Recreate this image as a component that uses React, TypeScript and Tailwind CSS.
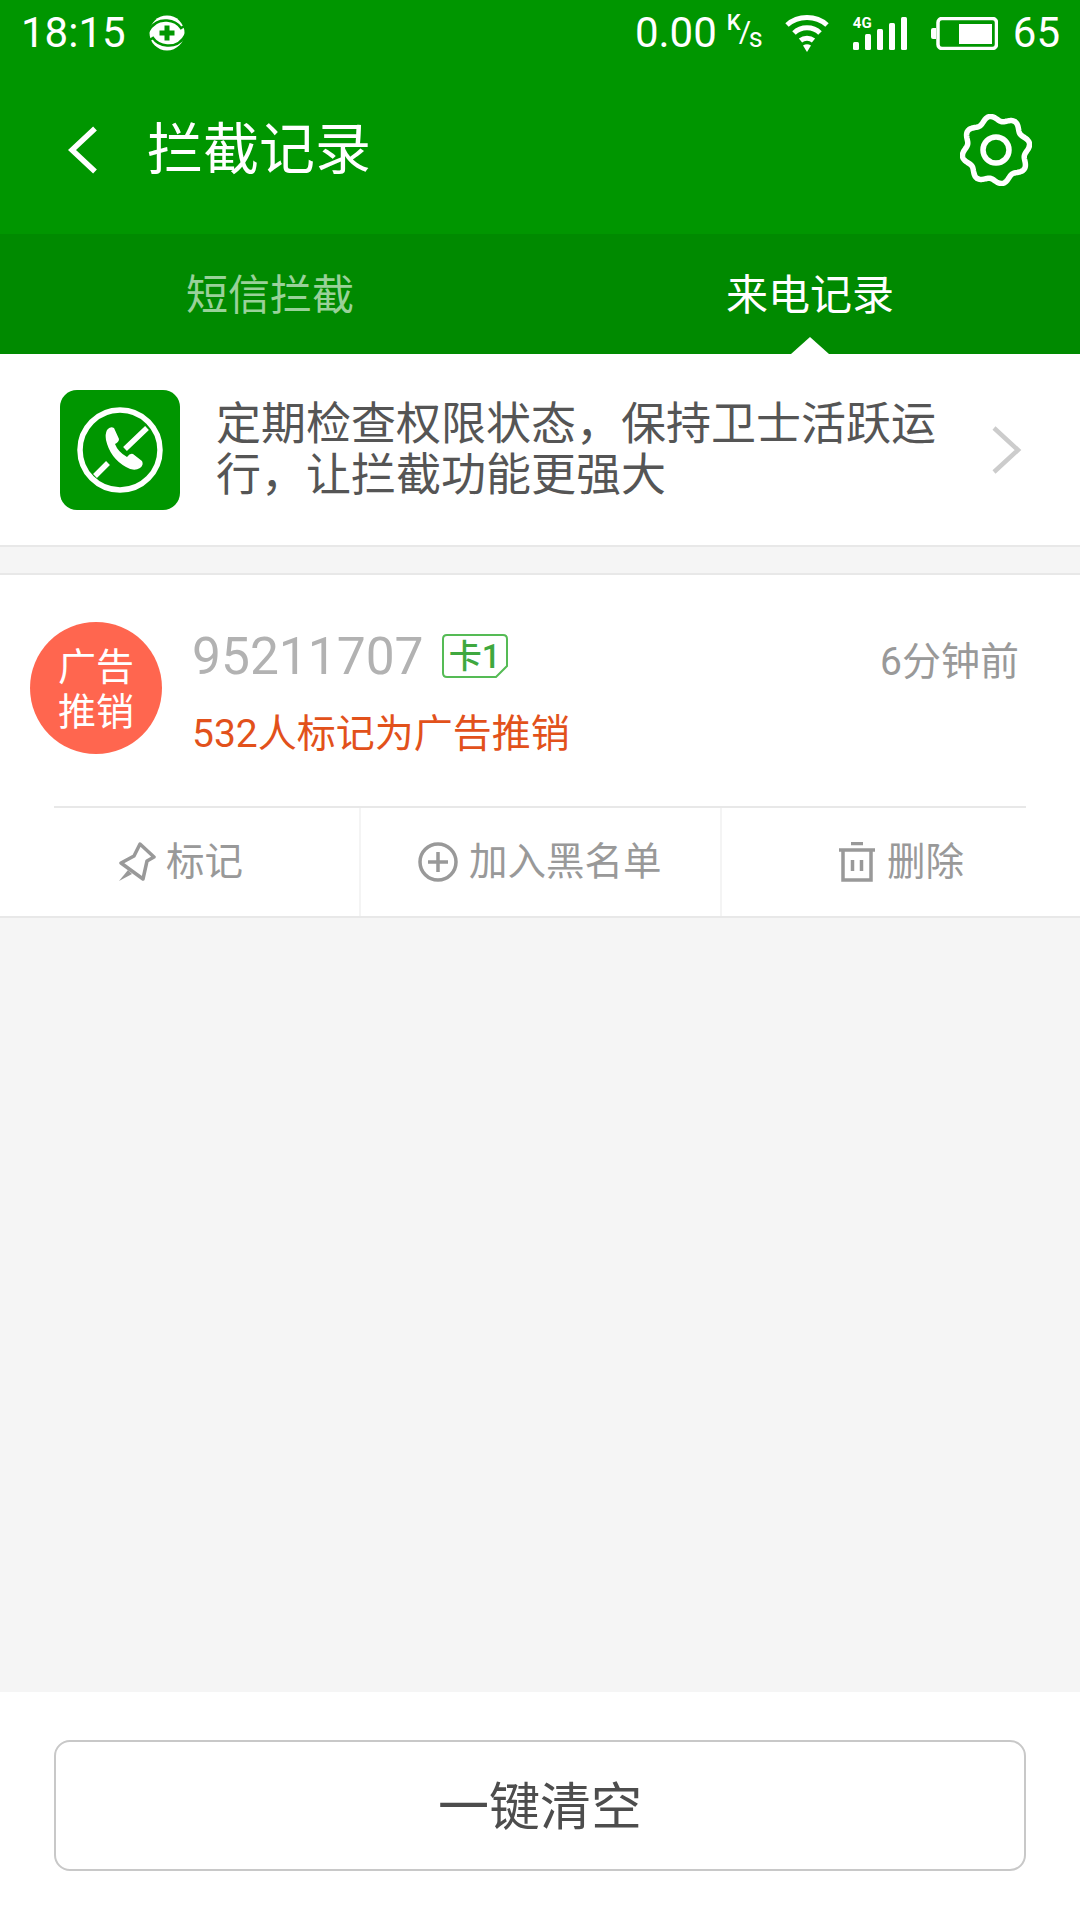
const gearPath = (() => {
    // scalloped outline with 8 bumps
    const pts: string[] = [];
    for (let i = 0; i < 240; i++) {
        const a = (i / 240) * Math.PI * 2;
        const r = 31.5 + 2.6 * Math.cos(a * 8 + Math.PI / 2);
        pts.push(`${(36 + r * Math.cos(a)).toFixed(2)} ${(36 + r * Math.sin(a)).toFixed(2)}`);
    }
    return `M${pts.join('L')}Z`;
})();

function GuardLogo() {
    return (
        <svg width="36" height="36" viewBox="0 0 36 36">
            <circle cx="18" cy="18" r="17.500" fill="white" />
            <path d="M-1 17C4 7 12 5 18 5.500c6 .5 11 3 14 7.500l5-3" fill="none" stroke="#009600" strokeWidth="2.500" />
            <path d="M37 19C32 29 24 31 18 30.500c-6-.5-11-3-14-7.500l-5 3" fill="none" stroke="#009600" strokeWidth="2.500" />
            <path d="M15.500 10.500h5v5h5v5h-5v5h-5v-5h-5v-5h5z" fill="#009600" />
        </svg>
    );
}

function WifiIcon() {
    return (
        <svg width="44" height="38" viewBox="0 0 44 38" fill="none" stroke="white" strokeWidth="5">
            <path d="M2 11C13 1 31 1 42 11" />
            <path d="M9 19C16 12 28 12 35 19" />
            <path d="M15.500 26.500C19 23.500 25 23.500 28.500 26.500" />
            <path d="M18 31.500L22 38L26 31.500Q22 29 18 31.500Z" fill="white" stroke="none" />
        </svg>
    );
}

function SignalIcon() {
    return (
        <div className="relative w-[54px] h-[33px]">
            <span className="absolute left-0 top-[-1px] text-[15px] leading-[14px] font-bold text-white">4G</span>
            <svg className="absolute inset-0" width="54" height="33" viewBox="0 0 54 33" fill="white">
                <rect x="0" y="25" width="6" height="8" rx="1.500" />
                <rect x="12" y="17" width="6" height="16" rx="1.500" />
                <rect x="24" y="12" width="6" height="21" rx="1.500" />
                <rect x="36" y="6" width="6" height="27" rx="1.500" />
                <rect x="48" y="0" width="6" height="33" rx="1.500" />
            </svg>
        </div>
    );
}

function BatteryIcon() {
    return (
        <svg width="67" height="33" viewBox="0 0 67 33" fill="white">
            <path d="M0 13q0-2 2-2h3v11H2q-2 0-2-2z" />
            <rect x="7" y="1.500" width="58.500" height="30" rx="4" fill="none" stroke="white" strokeWidth="3.500" />
            <rect x="28" y="7" width="33" height="20" />
        </svg>
    );
}

function ChevronLeft() {
    return (
        <svg width="30" height="48" viewBox="0 0 30 48" fill="none" stroke="white" strokeWidth="5.500">
            <path d="M27 2.500L4 24L27 45.500" />
        </svg>
    );
}

function GearIcon() {
    return (
        <svg width="72" height="72" viewBox="0 0 72 72" fill="none" stroke="white" strokeWidth="5.500">
            <path d={gearPath} strokeLinejoin="round" />
            <circle cx="36" cy="36" r="13" />
        </svg>
    );
}

function BlockedCallIcon() {
    return (
        <svg width="120" height="120" viewBox="0 0 120 120" className="shrink-0">
            <rect width="120" height="120" rx="17" fill="#009600" />
            <circle cx="60" cy="60" r="40" fill="none" stroke="white" strokeWidth="5.500" />
            <path d="M87 38L65 59M48 73L35 86" fill="none" stroke="white" strokeWidth="5.500" />
            <path d="M47 40Q50 36 54 38L59 49Q59 52 55 54Q58 62 67 67Q70 63 73 64L82 71Q84 75 80 78Q74 82 66 77Q50 68 46 50Q45 44 47 40Z" fill="white" />
        </svg>
    );
}

function PinIcon() {
    return (
        <svg width="38" height="40" viewBox="0 0 38 40" fill="none" stroke="#999999" strokeWidth="3.500" strokeLinejoin="round">
            <path d="M22 2L36 15L29 19L25 37L3 21L16 14Z" />
            <path d="M10 28L1 39L14 32Z" fill="#999999" stroke="none" />
        </svg>
    );
}

function PlusCircleIcon() {
    return (
        <svg width="40" height="40" viewBox="0 0 40 40" fill="none" stroke="#999999" strokeWidth="3.500">
            <circle cx="20" cy="20" r="18" />
            <path d="M20 10V30M10 20H30" />
        </svg>
    );
}

function TrashIcon() {
    return (
        <svg width="36" height="40" viewBox="0 0 36 40" fill="none" stroke="#999999" strokeWidth="3.500">
            <path d="M12 1.500H24M0 8H36M4 8V38H32V8" />
            <path d="M13.500 18V29M22.500 18V29" />
        </svg>
    );
}

const actions = [
    { label: '标记', icon: <PinIcon />, cls: 'w-[361px] pl-[118px] gap-[10px]', sep: true },
    { label: '加入黑名单', icon: <PlusCircleIcon />, cls: 'w-[361px] pl-[57px] gap-[11px]', sep: true },
    { label: '删除', icon: <TrashIcon />, cls: 'flex-1 pl-[117px] gap-[12px]', sep: false },
];

export default function App() {
    return (
        <div className="w-[1080px] h-[1920px] flex flex-col bg-[#f5f5f5] font-['Roboto','Noto_Sans_CJK_SC',sans-serif]">
            {/* Status bar + title */}
            <div className="bg-[#009600] text-white">
                <div className="h-[66px] flex items-center pl-[21px] pr-[20px]">
                    <span className="text-[42px] leading-none">18:15</span>
                    <span className="ml-[23px]"><GuardLogo /></span>
                    <div className="ml-auto flex items-center">
                        <span className="text-[42px] leading-none">0.00</span>
                        <span className="relative w-[36px] h-[36px] ml-[10px]">
                            <span className="absolute left-0 top-[-4px] text-[22px] font-medium leading-[24px]">K</span>
                            <span className="absolute left-[12px] top-[1px] text-[30px] leading-[32px]">/</span>
                            <span className="absolute left-[22px] top-[10px] text-[27px] leading-[26px]">s</span>
                        </span>
                        <span className="ml-[22px]"><WifiIcon /></span>
                        <span className="ml-[24px]"><SignalIcon /></span>
                        <span className="ml-[24px]"><BatteryIcon /></span>
                        <span className="ml-[15px] text-[42px] leading-none">65</span>
                    </div>
                </div>
                <div className="h-[168px] flex items-center pl-[68px] pr-[48px]">
                    <ChevronLeft />
                    <h1 className="ml-[49px] text-[56px] leading-none font-normal">拦截记录</h1>
                    <span className="ml-auto"><GearIcon /></span>
                </div>
            </div>

            {/* Tabs */}
            <div className="h-[120px] flex bg-[#008a00]">
                <div className="w-1/2 flex items-center justify-center pt-[3px] text-[42px] text-[#99d199]">短信拦截</div>
                <div className="relative w-1/2 flex items-center justify-center pt-[3px] text-[42px] text-white">
                    来电记录
                    <div className="absolute bottom-0 left-1/2 -translate-x-1/2 w-0 h-0 border-x-[19px] border-x-transparent border-b-[17px] border-b-white" />
                </div>
            </div>

            {/* Permission banner */}
            <div className="h-[193px] bg-white border-b-2 border-[#e8e8e8] flex items-center pl-[60px]">
                <BlockedCallIcon />
                <p className="ml-[36px] w-[730px] text-[45px] leading-[51px] text-[#555555]">定期检查权限状态，保持卫士活跃运行，让拦截功能更强大</p>
                <svg className="ml-[46px]" width="30" height="48" viewBox="0 0 30 48" fill="none" stroke="#cccccc" strokeWidth="4.500">
                    <path d="M2 2L26 24L2 46" />
                </svg>
            </div>

            {/* Record card */}
            <div className="mt-[26px] bg-white border-y-2 border-[#e8e8e8] h-[345px] flex flex-col">
                <div className="h-[232px] flex pl-[30px] pr-[61px]">
                    <div className="mt-[47px] w-[132px] h-[132px] rounded-full bg-[#ff664f] text-white text-[38px] leading-[45px] pt-[4px] flex flex-col items-center justify-center">
                        <span>广告</span>
                        <span>推销</span>
                    </div>
                    <div className="ml-[30px] flex-1">
                        <div className="mt-[50px] h-[64px] flex items-center">
                            <span className="text-[51.500px] leading-none text-[#b2b2b2]">95211707</span>
                            <span className="relative ml-[18px] -mt-[2px] w-[66px] h-[44px] flex items-center justify-center text-[#3fa83f] text-[33px] font-medium leading-none">
                                <svg className="absolute inset-0" width="66" height="44" viewBox="0 0 66 44" fill="none" stroke="#55bb55" strokeWidth="2">
                                    <path d="M5 1H61Q65 1 65 5V32L54 43H5Q1 43 1 39V5Q1 1 5 1Z" />
                                </svg>
                                卡1
                            </span>
                            <span className="ml-auto pt-[10px] text-[39px] leading-none text-[#999999]">6分钟前</span>
                        </div>
                        <p className="mt-[17px] text-[39px] leading-[56px] text-[#e2511b]">532人标记为广告推销</p>
                    </div>
                </div>
                <div className="flex-1 mx-[54px] border-t-2 border-[#e8e8e8] -mt-[1px]" />
                <div className="h-[108px] flex -mt-[108px]">
                    {actions.map((a) => (
                        <div key={a.label} className={`flex items-center text-[38.500px] text-[#999999] ${a.cls} ${a.sep ? 'border-r-2 border-[#f4f4f4]' : ''}`}>
                            {a.icon}
                            <span>{a.label}</span>
                        </div>
                    ))}
                </div>
            </div>

            <div className="flex-1" />

            {/* Bottom action */}
            <div className="h-[228px] bg-white px-[54px] pt-[48px]">
                <button className="w-full h-[131px] pt-[6px] bg-white border-2 border-[#c8c8c8] rounded-[16px] text-[51px] text-[#4d4d4d]">一键清空</button>
            </div>
        </div>
    );
}
